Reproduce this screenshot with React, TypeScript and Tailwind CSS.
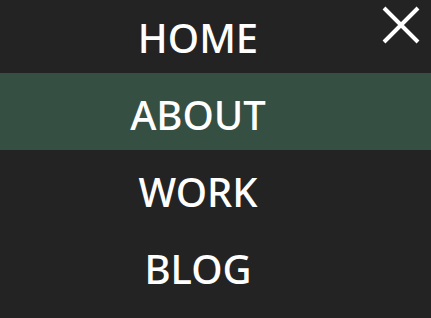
const items = ["HOME", "ABOUT", "WORK", "BLOG"];

export default function App() {
  const active = "ABOUT";
  return (
    <div
      className="relative h-[318px] w-[431px] overflow-hidden bg-[#232323] text-white"
      style={{ fontFamily: '"Comic Sans MS", "Noto Sans", sans-serif' }}
    >
      <nav className="-mt-[4px] flex flex-col pr-[35px]">
        {items.map((item) => (
          <a
            key={item}
            href="#"
            className={
              "flex h-[77px] items-center justify-center pt-[7px] text-[40px] font-medium leading-none " +
              (item === active ? "bg-[#354f42] -mr-[35px] pr-[35px]" : "")
            }
          >
            {item}
          </a>
        ))}
      </nav>
      <button className="absolute right-[11px] top-[6px] h-[38px] w-[38px]" aria-label="Close">
        <svg viewBox="0 0 38 38" className="h-full w-full" fill="none" stroke="white" strokeWidth="4" strokeLinecap="butt">
          <path d="M2 2 L36 36 M36 2 L2 36" />
        </svg>
      </button>
    </div>
  );
}
